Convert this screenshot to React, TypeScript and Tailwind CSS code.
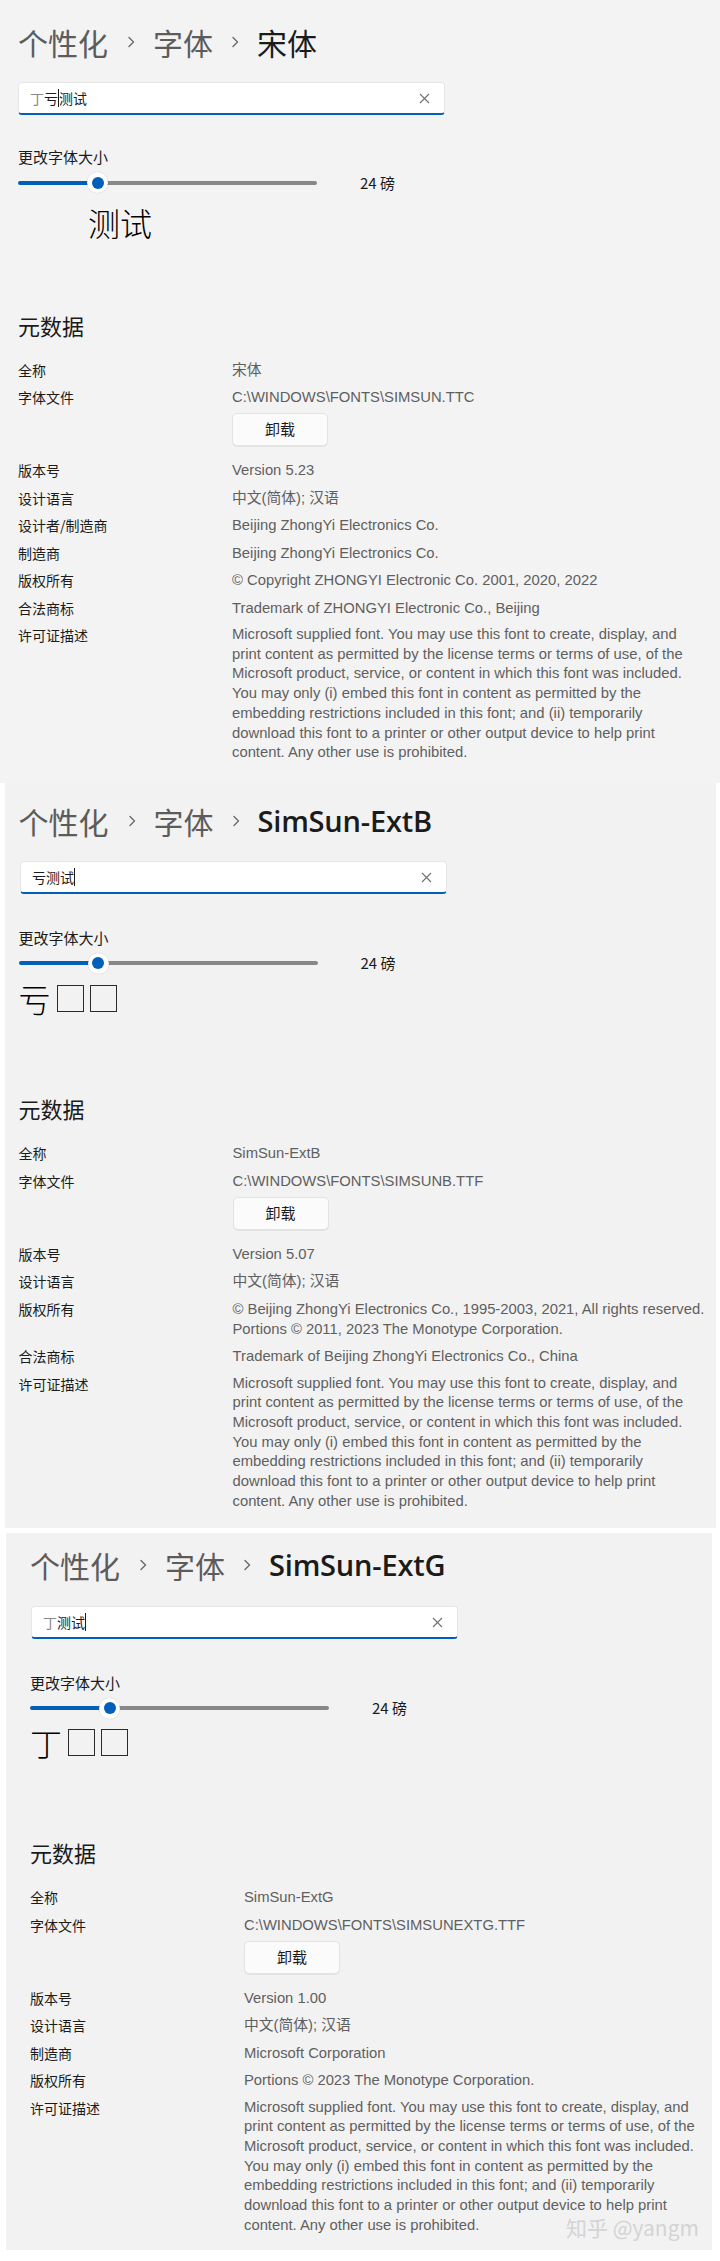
import React from "react";

const LAT = "font-['Liberation_Sans','Noto_Sans_CJK_SC',sans-serif]";
const CJK = "font-['Noto_Sans_CJK_SC',sans-serif]";

const LICENSE = [
  "Microsoft supplied font. You may use this font to create, display, and",
  "print content as permitted by the license terms or terms of use, of the",
  "Microsoft product, service, or content in which this font was included.",
  "You may only (i) embed this font in content as permitted by the",
  "embedding restrictions included in this font; and (ii) temporarily",
  "download this font to a printer or other output device to help print",
  "content. Any other use is prohibited.",
];

type RowT = { label: string; lines: string[]; button?: boolean };

function Chevron() {
  return (
    <svg width="10" height="14" viewBox="0 0 10 14" className="shrink-0">
      <polyline points="3,2.5 7.5,7 3,11.5" fill="none" stroke="#6a6a6a" strokeWidth="1.4" strokeLinecap="round" strokeLinejoin="round" />
    </svg>
  );
}

function Breadcrumb({ current, latin }: { current: string; latin?: boolean }) {
  return (
    <div className="flex items-center h-[40px] text-[30px] leading-[40px] whitespace-nowrap">
      <span className={`${CJK} text-[#5c5c5c]`}>个性化</span>
      <span className="ml-[18px] mr-[17px] flex items-center"><Chevron /></span>
      <span className={`${CJK} text-[#5c5c5c]`}>字体</span>
      <span className="ml-[17px] mr-[17px] flex items-center"><Chevron /></span>
      {latin ? (
        <span className="font-['Open_Sans','Noto_Sans_CJK_SC',sans-serif] font-semibold text-[#1b1b1b] text-[29px] tracking-[-0.2px]">{current}</span>
      ) : (
        <span className={`${CJK} text-[#1b1b1b]`}>{current}</span>
      )}
    </div>
  );
}

function SearchBox({ children, mt }: { children: React.ReactNode; mt: string }) {
  return (
    <div className={`${mt} w-[427px] h-[33px] bg-white rounded-[4px] border border-[#e6e6e6] border-b-2 border-b-[#005fb8] flex items-center pl-[11px] pr-[14px]`}>
      <div className={`${CJK} flex-1 flex items-center text-[14px] leading-[20px] text-[#1b1b1b]`}>{children}</div>
      <svg width="11" height="11" viewBox="0 0 11 11">
        <path d="M1 1 L10 10 M10 1 L1 10" stroke="#707070" strokeWidth="1.1" />
      </svg>
    </div>
  );
}

function Caret() {
  return <span className="inline-block w-px h-[18px] bg-[#1b1b1b]" />;
}

function SizeControl({ mtLabel, mtSlider }: { mtLabel: string; mtSlider: string }) {
  return (
    <>
      <div className={`${mtLabel} ${CJK} text-[15px] leading-[20px] text-[#1b1b1b]`}>更改字体大小</div>
      <div className={`${mtSlider} flex items-center h-[20px]`}>
        <div className="relative w-[299px] h-[20px] flex items-center">
          <div className="h-[4px] w-[80px] bg-[#005fb8] rounded-l-full" />
          <div className="h-[4px] flex-1 bg-[#888888] rounded-r-full" />
          <div className="absolute left-[69px] top-0 w-[21px] h-[21px] -mt-[0.5px] rounded-full bg-white shadow-[0_0_1px_rgba(0,0,0,0.25)] flex items-center justify-center">
            <div className="w-[12px] h-[12px] rounded-full bg-[#005fb8]" />
          </div>
        </div>
        <span className={`${CJK} ml-[43px] text-[15px] leading-[20px] text-[#1b1b1b]`}>24 磅</span>
      </div>
    </>
  );
}

function Tofu() {
  return <span className="inline-block w-[27px] h-[27px] border-[1.5px] border-[#2a2a2a] ml-[6px]" />;
}

function Metadata({ mtTitle, mtRows, rows }: { mtTitle: string; mtRows: string; rows: RowT[] }) {
  return (
    <>
      <div className={`${mtTitle} ${CJK} text-[22px] leading-[30px] text-[#1b1b1b]`}>元数据</div>
      <div className={`${mtRows} flex flex-col gap-[7.5px]`}>
        {rows.map((r, i) => (
          <React.Fragment key={i}>
            <div className="grid grid-cols-[214px_1fr] leading-[20px]">
              <div className={`${CJK} text-[14px] text-[#1b1b1b] w-fit`}>{r.label}</div>
              <div className={`${LAT} text-[14.8px] text-[#5f5f5f] whitespace-nowrap`}>
                {r.lines.map((l, j) => (
                  <div key={j} className={`w-fit ${r.lines.length === 7 ? "leading-[19.7px]" : ""}`}>{l}</div>
                ))}
              </div>
            </div>
            {r.button && (
              <div className="grid grid-cols-[214px_1fr] -mt-[1.5px] mb-[6.5px]">
                <div />
                <div className={`${CJK} w-[96px] h-[33px] bg-[#fbfbfb] rounded-[5px] border border-[#e3e3e3] shadow-[0_1px_0_rgba(0,0,0,0.06)] flex items-center justify-center text-[15px] text-[#1b1b1b]`}>卸载</div>
              </div>
            )}
          </React.Fragment>
        ))}
      </div>
    </>
  );
}

export default function App() {
  const rows1: RowT[] = [
    { label: "全称", lines: ["宋体"] },
    { label: "字体文件", lines: ["C:\\WINDOWS\\FONTS\\SIMSUN.TTC"], button: true },
    { label: "版本号", lines: ["Version 5.23"] },
    { label: "设计语言", lines: ["中文(简体); 汉语"] },
    { label: "设计者/制造商", lines: ["Beijing ZhongYi Electronics Co."] },
    { label: "制造商", lines: ["Beijing ZhongYi Electronics Co."] },
    { label: "版权所有", lines: ["© Copyright ZHONGYI Electronic Co. 2001, 2020, 2022"] },
    { label: "合法商标", lines: ["Trademark of ZHONGYI Electronic Co., Beijing"] },
    { label: "许可证描述", lines: LICENSE },
  ];
  const rows2: RowT[] = [
    { label: "全称", lines: ["SimSun-ExtB"] },
    { label: "字体文件", lines: ["C:\\WINDOWS\\FONTS\\SIMSUNB.TTF"], button: true },
    { label: "版本号", lines: ["Version 5.07"] },
    { label: "设计语言", lines: ["中文(简体); 汉语"] },
    { label: "版权所有", lines: ["© Beijing ZhongYi Electronics Co., 1995-2003, 2021, All rights reserved.", "Portions © 2011, 2023 The Monotype Corporation."] },
    { label: "合法商标", lines: ["Trademark of Beijing ZhongYi Electronics Co., China"] },
    { label: "许可证描述", lines: LICENSE },
  ];
  const rows3: RowT[] = [
    { label: "全称", lines: ["SimSun-ExtG"] },
    { label: "字体文件", lines: ["C:\\WINDOWS\\FONTS\\SIMSUNEXTG.TTF"], button: true },
    { label: "版本号", lines: ["Version 1.00"] },
    { label: "设计语言", lines: ["中文(简体); 汉语"] },
    { label: "制造商", lines: ["Microsoft Corporation"] },
    { label: "版权所有", lines: ["Portions © 2023 The Monotype Corporation."] },
    { label: "许可证描述", lines: LICENSE },
  ];

  return (
    <div className="w-[720px] h-[2261px] bg-white overflow-hidden">
      {/* Panel 1 */}
      <div className="h-[783px] bg-[#f3f3f3] pl-[18px] pt-[22px] flex flex-col">
        <Breadcrumb current="宋体" />
        <SearchBox mt="mt-[20px]">
          <span className="text-[#8a8a8a]">丁</span>
          <span>亏</span>
          <Caret />
          <span>测试</span>
        </SearchBox>
        <SizeControl mtLabel="mt-[32px]" mtSlider="mt-[5.5px]" />
        <div className={`mt-[9.5px] ${CJK} font-light text-[32px] leading-[40px] text-black flex items-center`}>
          <span className="inline-block w-[70px]" />
          <span>测试</span>
        </div>
        <Metadata mtTitle="mt-[67.5px]" mtRows="mt-[20px]" rows={rows1} />
      </div>

      {/* Panel 2 */}
      <div className="h-[745px] ml-[5px] mr-[4px] bg-[#f2f2f2] pl-[13.5px] pt-[18px] flex flex-col">
        <Breadcrumb current="SimSun-ExtB" latin />
        <SearchBox mt="mt-[20px] ml-[1.5px]">
          <span>亏测试</span>
          <Caret />
        </SearchBox>
        <SizeControl mtLabel="mt-[33.5px]" mtSlider="mt-[5.5px]" />
        <div className={`mt-[5px] ${CJK} font-light text-[32px] leading-[40px] text-black flex items-center`}>
          <span>亏</span>
          <Tofu />
          <Tofu />
        </div>
        <Metadata mtTitle="mt-[75px]" mtRows="mt-[20px]" rows={rows2} />
      </div>

      <div className="h-[5px]" />

      {/* Panel 3 */}
      <div className="relative h-[717px] ml-[6px] mr-[8px] bg-[#f2f2f2] pl-[24px] pt-[12px] flex flex-col">
        <Breadcrumb current="SimSun-ExtG" latin />
        <SearchBox mt="mt-[21px] ml-[1px]">
          <span className="text-[#8a8a8a]">丁</span>
          <span>测试</span>
          <Caret />
        </SearchBox>
        <SizeControl mtLabel="mt-[33.5px]" mtSlider="mt-[5.5px]" />
        <div className={`mt-[4px] ${CJK} font-light text-[32px] leading-[40px] text-black flex items-center`}>
          <span>丁</span>
          <Tofu />
          <Tofu />
        </div>
        <Metadata mtTitle="mt-[75px]" mtRows="mt-[20px]" rows={rows3} />
        <div className={`absolute left-[560px] top-[680px] ${CJK} text-[21px] leading-[28px] text-[#d4d4d4] whitespace-nowrap`}>
          知乎 @yangm
        </div>
      </div>
    </div>
  );
}
